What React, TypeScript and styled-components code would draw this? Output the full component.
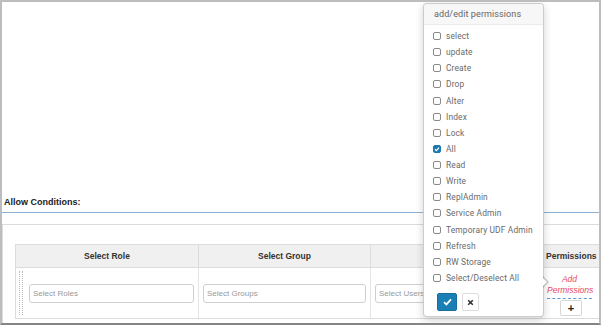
import React from "react";
import styled, { createGlobalStyle } from "styled-components";

const Global = createGlobalStyle`
  html, body { margin: 0; padding: 0; background: #fff; }
  * { box-sizing: border-box; }
`;

const Frame = styled.div`
  width: 601px;
  height: 325px;
  border: 2px solid #bdbdbd;
  border-bottom-color: #858585;
  position: relative;
  overflow: hidden;
  font-family: "Liberation Sans", Arial, sans-serif;
`;

const Section = styled.div`
  padding-top: 195px;
  display: flex;
  flex-direction: column;
`;

const Heading = styled.div`
  font-size: 9px;
  font-weight: bold;
  color: #222;
  padding: 0 0 4px 2px;
  line-height: 11px;
  border-bottom: 1px solid #8fb2d3;
`;

const Panel = styled.div`
  margin-top: 11px;
  border: 1px solid #dcdcdc;
  border-right: none;
  padding: 19px 0 0 12px;
  height: 120px;
`;

const Table = styled.div`
  display: grid;
  grid-template-columns: 183px 172px 171px 80px;
  border: 1px solid #dcdcdc;
  border-right: none;
  width: 620px;
`;

const HeadCell = styled.div<{ $left?: boolean }>`
  height: 23px;
  background: #f0f0f0;
  border-right: 1px solid #dcdcdc;
  border-bottom: 1px solid #dcdcdc;
  font-size: 8.5px;
  font-weight: bold;
  color: #333;
  display: flex;
  align-items: center;
  justify-content: ${(p) => (p.$left ? "flex-start" : "center")};
  padding-left: ${(p) => (p.$left ? 4 : 0)}px;
`;

const BodyCell = styled.div<{ $pad?: number }>`
  height: 50px;
  border-right: 1px solid #e4e4e4;
  display: flex;
  align-items: center;
  padding-left: ${(p) => p.$pad ?? 4}px;
  padding-right: 4px;
  gap: 6px;
`;

const Handle = styled.div`
  width: 4px;
  height: 44px;
  border-left: 1px dotted #bbb;
  border-right: 1px dotted #bbb;
  flex: none;
`;

const Input = styled.div`
  flex: 1;
  height: 19px;
  border: 1px solid #cfcfcf;
  border-radius: 3px;
  font-size: 8px;
  color: #999;
  display: flex;
  align-items: center;
  padding-left: 3px;
`;

const PermCell = styled.div`
  height: 50px;
  display: flex;
  flex-direction: column;
  align-items: flex-start;
  padding-left: 5px;
  padding-top: 6px;
`;

const PermLink = styled.div`
  width: 45px;
  text-align: center;
  font-size: 8.5px;
  line-height: 11px;
  font-style: italic;
  color: #e8495e;
  border-bottom: 1px dashed #5b9bd5;
  padding-bottom: 2px;
`;

const PlusBtn = styled.div`
  margin: 1px 0 0 13px;
  width: 22px;
  height: 16px;
  border: 1px solid #d6d6d6;
  border-radius: 2px;
  background: #fff;
  font-size: 11px;
  font-weight: bold;
  color: #222;
  display: flex;
  align-items: center;
  justify-content: center;
  line-height: 1;
`;

const Popover = styled.div`
  position: absolute;
  left: 421px;
  top: 1px;
  width: 121px;
  height: 314px;
  background: #fff;
  border: 1px solid rgba(0, 0, 0, 0.2);
  border-radius: 4px;
  box-shadow: 0 3px 8px rgba(0, 0, 0, 0.18);
  font-family: Roboto, "Liberation Sans", sans-serif;
  display: flex;
  flex-direction: column;
`;

const Arrow = styled.div`
  position: absolute;
  right: -6px;
  top: 272px;
  width: 0;
  height: 0;
  border-top: 6px solid transparent;
  border-bottom: 6px solid transparent;
  border-left: 6px solid rgba(0, 0, 0, 0.2);
  &::after {
    content: "";
    position: absolute;
    left: -7px;
    top: -5px;
    border-top: 5px solid transparent;
    border-bottom: 5px solid transparent;
    border-left: 5px solid #fff;
  }
`;

const PopHead = styled.div`
  height: 21px;
  background: #f7f7f7;
  border-bottom: 1px solid #ebebeb;
  border-radius: 4px 4px 0 0;
  font-size: 9px;
  color: #666;
  display: flex;
  align-items: center;
  padding-left: 10px;
  letter-spacing: 0.1px;
`;

const List = styled.div`
  padding: 3px 0 0 9px;
  display: flex;
  flex-direction: column;
`;

const Item = styled.div`
  height: 16.13px;
  display: flex;
  align-items: center;
  gap: 5px;
  font-size: 8.4px;
  color: #6a6a6a;
  letter-spacing: 0.15px;
`;

const Box = styled.span<{ $on?: boolean }>`
  width: 8px;
  height: 8px;
  border: 1px solid ${(p) => (p.$on ? "#1a7ab0" : "#8a8a8a")};
  border-radius: 2px;
  background: ${(p) => (p.$on ? "#1a7ab0" : "#fff")};
  display: flex;
  align-items: center;
  justify-content: center;
  flex: none;
`;

const Buttons = styled.div`
  display: flex;
  gap: 5px;
  padding: 7px 0 0 13px;
`;

const Btn = styled.div<{ $primary?: boolean }>`
  width: ${(p) => (p.$primary ? 20 : 17)}px;
  height: 18px;
  border-radius: 2px;
  background: ${(p) => (p.$primary ? "#1a7fb5" : "#fff")};
  border: 1px solid ${(p) => (p.$primary ? "#16709f" : "#ddd")};
  display: flex;
  align-items: center;
  justify-content: center;
`;

const perms = [
  "select",
  "update",
  "Create",
  "Drop",
  "Alter",
  "Index",
  "Lock",
  "All",
  "Read",
  "Write",
  "ReplAdmin",
  "Service Admin",
  "Temporary UDF Admin",
  "Refresh",
  "RW Storage",
  "Select/Deselect All",
];

export default function App() {
  return (
    <>
      <Global />
      <Frame>
        <Section>
          <Heading>Allow Conditions:</Heading>
          <Panel>
            <Table>
              <HeadCell>Select Role</HeadCell>
              <HeadCell>Select Group</HeadCell>
              <HeadCell>Select Users</HeadCell>
              <HeadCell $left>Permissions</HeadCell>
              <BodyCell $pad={3}>
                <Handle />
                <Input>Select Roles</Input>
              </BodyCell>
              <BodyCell>
                <Input>Select Groups</Input>
              </BodyCell>
              <BodyCell>
                <Input>Select Users</Input>
              </BodyCell>
              <PermCell>
                <PermLink>
                  Add
                  <br />
                  Permissions
                </PermLink>
                <PlusBtn>+</PlusBtn>
              </PermCell>
            </Table>
          </Panel>
        </Section>
        <Popover>
          <Arrow />
          <PopHead>add/edit permissions</PopHead>
          <List>
            {perms.map((p) => (
              <Item key={p}>
                <Box $on={p === "All"}>
                  {p === "All" && (
                    <svg width="6" height="6" viewBox="0 0 6 6">
                      <path d="M1 3.2 L2.4 4.6 L5 1.6" stroke="#fff" strokeWidth="1.3" fill="none" />
                    </svg>
                  )}
                </Box>
                {p}
              </Item>
            ))}
          </List>
          <Buttons>
            <Btn $primary>
              <svg width="9" height="8" viewBox="0 0 9 8">
                <path d="M1 4.2 L3.4 6.4 L8 1.4" stroke="#fff" strokeWidth="1.8" fill="none" />
              </svg>
            </Btn>
            <Btn>
              <svg width="7" height="7" viewBox="0 0 7 7">
                <path d="M1.2 1.2 L5.8 5.8 M5.8 1.2 L1.2 5.8" stroke="#333" strokeWidth="1.6" />
              </svg>
            </Btn>
          </Buttons>
        </Popover>
      </Frame>
    </>
  );
}
